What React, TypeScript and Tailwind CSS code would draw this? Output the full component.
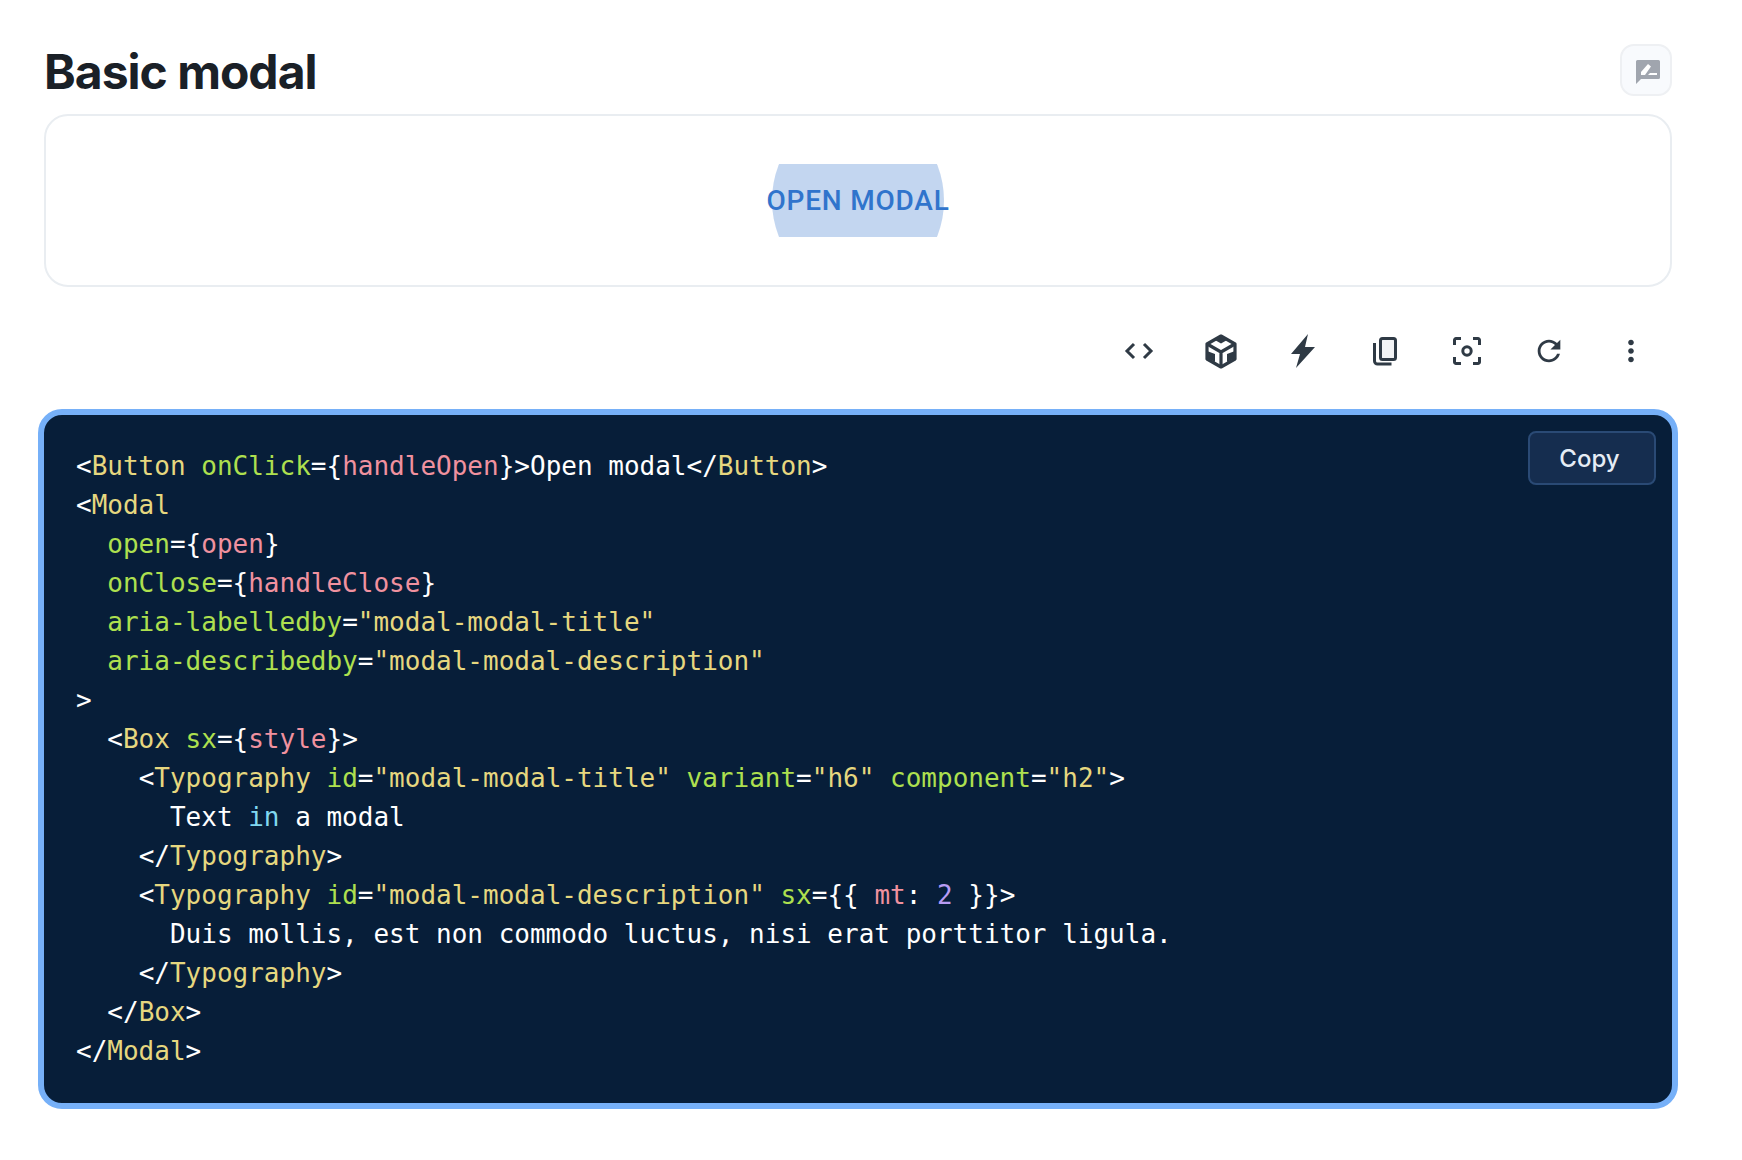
const mono = "font-['DejaVu_Sans_Mono','Liberation_Mono',monospace]";

type Tok = [string, string];

const W = "text-white";
const Y = "text-[#e6d77f]";
const G = "text-[#aee04f]";
const P = "text-[#f0919f]";
const C = "text-[#80d8ef]";
const V = "text-[#b79cf5]";

const tag = (name: string): Tok[] => [["<", W], [name, Y]];
const close = (name: string): Tok[] => [["</", W], [name, Y], [">", W]];

const lines: Tok[][] = [
  [...tag("Button"), [" ", W], ["onClick", G], ["={", W], ["handleOpen", P], ["}>Open modal", W], ...close("Button")],
  tag("Modal"),
  [["  ", W], ["open", G], ["={", W], ["open", P], ["}", W]],
  [["  ", W], ["onClose", G], ["={", W], ["handleClose", P], ["}", W]],
  [["  ", W], ["aria-labelledby", G], ["=", W], ['"modal-modal-title"', Y]],
  [["  ", W], ["aria-describedby", G], ["=", W], ['"modal-modal-description"', Y]],
  [[">", W]],
  [["  ", W], ...tag("Box"), [" ", W], ["sx", G], ["={", W], ["style", P], ["}>", W]],
  [["    ", W], ...tag("Typography"), [" ", W], ["id", G], ["=", W], ['"modal-modal-title"', Y], [" ", W], ["variant", G], ["=", W], ['"h6"', Y], [" ", W], ["component", G], ["=", W], ['"h2"', Y], [">", W]],
  [["      Text ", W], ["in", C], [" a modal", W]],
  [["    ", W], ...close("Typography")],
  [["    ", W], ...tag("Typography"), [" ", W], ["id", G], ["=", W], ['"modal-modal-description"', Y], [" ", W], ["sx", G], ["={{ ", W], ["mt", P], [": ", W], ["2", V], [" }}>", W]],
  [["      Duis mollis, est non commodo luctus, nisi erat porttitor ligula.", W]],
  [["    ", W], ...close("Typography")],
  [["  ", W], ...close("Box")],
  close("Modal"),
];

const Icon = ({ children }: { children: React.ReactNode }) => (
  <button className="w-[82px] h-[40px] flex items-center justify-center text-[#2f3a45]">{children}</button>
);

export default function App() {
  return (
    <div className="min-h-[1160px] bg-white font-['Inter',sans-serif] pl-[44px] pr-[70px] pt-[44px]">
      <div className="flex items-center justify-between h-[52px] mb-[18px]">
        <h2 className="mt-[3px] text-[48px] font-bold tracking-[-1px] text-[#1a2027]">Basic modal</h2>
        <button className="w-[52px] h-[52px] pl-[4px] pt-[4px] rounded-[14px] bg-[#f8fafd] border-2 border-[#eef0f3] flex items-center justify-center">
          <svg width="24" height="24" viewBox="0 0 24 24" className="text-[#a0a5ae]">
            <path fill="currentColor" d="M0 1.500A1.500 1.500 0 0 1 1.500 0h21A1.500 1.500 0 0 1 24 1.500v16a1.500 1.500 0 0 1-1.500 1.500H5l-5 5z" />
            <path fill="#fff" d="M5 15v-3L12 4l3 2.500L9 15zM12 15l2-2h7v2z" />
          </svg>
        </button>
      </div>
      <div className="h-[173px] border-2 border-[#e9edf1] rounded-[24px] flex items-center justify-center">
        <button className="relative w-[172px] h-[73px] flex items-center justify-center whitespace-nowrap font-['Roboto',sans-serif] text-[28px] tracking-[0.8px] font-medium text-[#3074cc]">
          <span className="absolute inset-0 bg-[#c3d6f0] [clip-path:ellipse(86px_92px_at_center)]"></span>
          <span className="relative">OPEN MODAL</span>
        </button>
      </div>
      <div className="flex justify-end items-center mt-[44px] h-[40px]">
        <Icon>
          <svg width="30" height="30" viewBox="0 0 30 30" fill="none" stroke="currentColor" strokeWidth="3">
            <path d="M10 8l-7 7 7 7M20 8l7 7-7 7" />
          </svg>
        </Icon>
        <Icon>
          <svg width="34" height="35" viewBox="0 0 34 35" fill="none" stroke="currentColor" strokeWidth="3.200" strokeLinejoin="round">
            <path d="M17 2L31 10v15l-14 8-14-8V10z" />
            <path d="M4 10.500L17 18l13-7.500M17 18v14" />
            <path fill="currentColor" stroke="none" d="M17 1l7 4.500-7 4-7-4zM3 17l8 3v8l-8-4zM31 17l-8 3v8l8-4z" />
          </svg>
        </Icon>
        <Icon>
          <svg width="32" height="36" viewBox="0 0 32 36" fill="currentColor">
            <path d="M21 1L4 21h9L9 35l19-21h-10z" />
          </svg>
        </Icon>
        <Icon>
          <svg width="24" height="29" viewBox="0 0 24 29" fill="none" stroke="currentColor" strokeWidth="3">
            <rect x="7.500" y="1.500" width="15" height="21" rx="2" fill="#f2f3f5" />
            <path d="M1.500 6v18a3 3 0 0 0 3 3h14" />
          </svg>
        </Icon>
        <Icon>
          <svg width="28" height="28" viewBox="0 0 28 28" fill="none" stroke="currentColor" strokeWidth="3">
            <path d="M1.500 8V3a1.500 1.500 0 0 1 1.500-1.500h5M20 1.500h5a1.500 1.500 0 0 1 1.500 1.500v5M26.500 20v5a1.500 1.500 0 0 1-1.500 1.500h-5M8 26.500H3A1.500 1.500 0 0 1 1.500 25v-5" />
            <circle cx="14" cy="14" r="4.200" />
          </svg>
        </Icon>
        <Icon>
          <svg width="34" height="34" viewBox="0 0 24 24" fill="currentColor">
            <path d="M17.650 6.350C16.200 4.900 14.210 4 12 4c-4.420 0-7.990 3.580-7.990 8s3.570 8 7.990 8c3.730 0 6.840-2.550 7.730-6h-2.080c-.82 2.330-3.040 4-5.650 4-3.310 0-6-2.690-6-6s2.690-6 6-6c1.660 0 3.140.69 4.220 1.780L13 11h7V4l-2.350 2.350z" />
          </svg>
        </Icon>
        <Icon>
          <svg width="34" height="34" viewBox="0 0 24 24" fill="currentColor">
            <path d="M12 8c1.100 0 2-.9 2-2s-.9-2-2-2-2 .9-2 2 .9 2 2 2zm0 2c-1.100 0-2 .9-2 2s.9 2 2 2 2-.9 2-2-.9-2-2-2zm0 6c-1.100 0-2 .9-2 2s.9 2 2 2 2-.9 2-2-.9-2-2-2z" />
          </svg>
        </Icon>
      </div>
      <div className="relative mt-[38px] -mx-[6px] h-[700px] rounded-[24px] border-[6px] border-[#76b0f8] bg-[#071e39] pl-[32px] pt-[32px]">
        <button className="absolute top-[16px] right-[16px] w-[128px] h-[54px] pr-[5px] pt-[2px] rounded-[8px] bg-[#152d4f] border-2 border-[#2a4a75] text-[#e5ecf5] text-[24px] font-medium">Copy</button>
        <pre className={`${mono} text-[26px] leading-[39px]`}>
          {lines.map((line, i) => (
            <div key={i}>
              {line.map(([text, color], j) => (
                <span key={j} className={color}>{text}</span>
              ))}
            </div>
          ))}
        </pre>
      </div>
    </div>
  );
}
